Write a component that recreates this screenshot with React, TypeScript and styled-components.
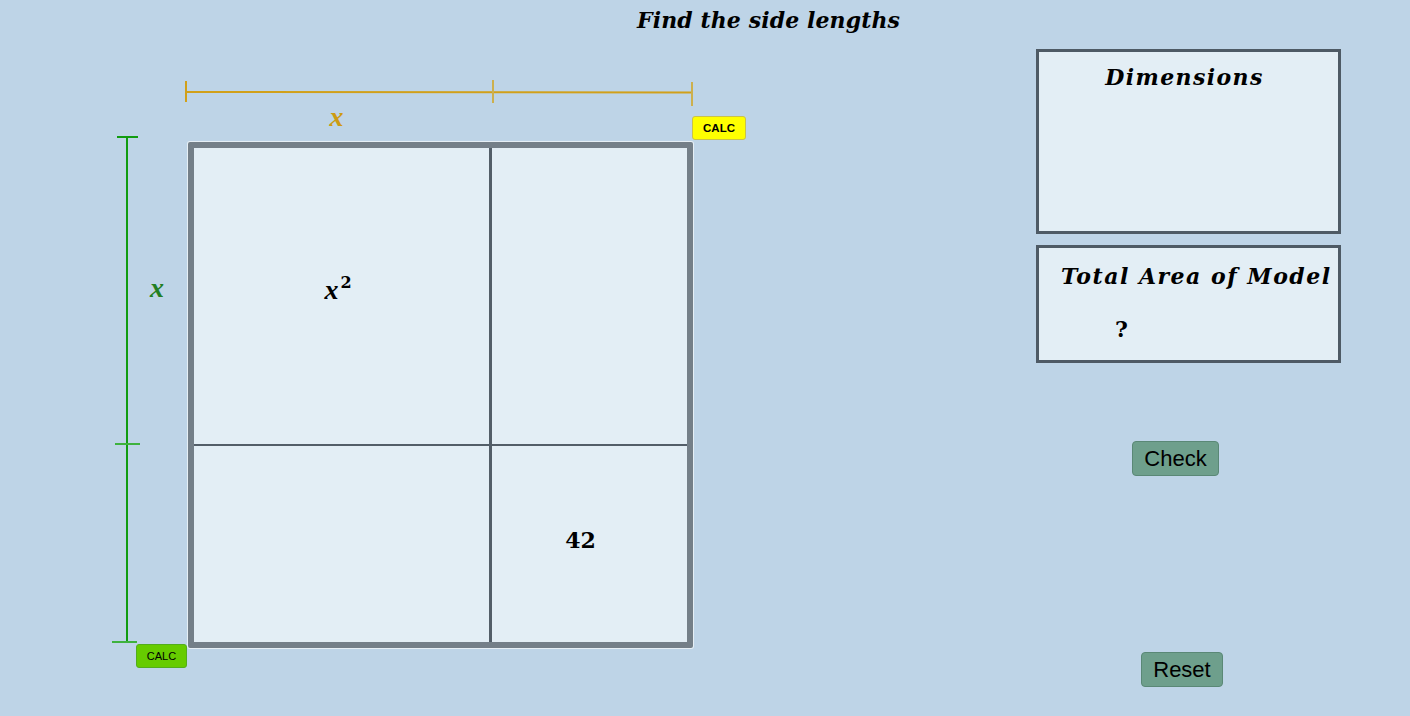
import React from "react";
import styled, { createGlobalStyle } from "styled-components";

const GlobalStyle = createGlobalStyle`
  html, body { margin: 0; padding: 0; }
  body {
    background: #bed4e7;
    font-family: "Liberation Sans", Arial, sans-serif;
  }
`;

const Page = styled.div`
  width: 1410px;
  height: 716px;
  overflow: hidden;
  background: #bed4e7;
  display: flex;
  flex-direction: column;
`;

const Header = styled.header`
  box-sizing: border-box;
  height: 37px;
  padding: 9px 0 0 127px;
  display: flex;
  justify-content: center;
`;

const Body = styled.main`
  display: flex;
  align-items: flex-start;
  padding: 0 69px 0 105px;
`;

const MathText = styled.span<{ $size: number; $weight?: number; $color?: string; $italic?: boolean; $spacing?: number }>`
  font-family: "DejaVu Serif", "Liberation Serif", serif;
  font-size: ${(p) => p.$size}px;
  font-weight: ${(p) => p.$weight ?? 700};
  font-style: ${(p) => (p.$italic === false ? "normal" : "italic")};
  letter-spacing: ${(p) => p.$spacing ?? 0}px;
  color: ${(p) => p.$color ?? "#000"};
  line-height: 1;
  white-space: nowrap;
`;

const Variable = styled.span<{ $size: number; $color?: string }>`
  font-family: "Liberation Serif", "Times New Roman", serif;
  font-size: ${(p) => p.$size}px;
  font-weight: 700;
  font-style: italic;
  color: ${(p) => p.$color ?? "#000"};
  line-height: 1;
  white-space: nowrap;
`;

const Sup = styled.sup`
  font-family: "DejaVu Serif", "Liberation Serif", serif;
  font-size: 16px;
  font-weight: 700;
  font-style: normal;
  vertical-align: 11px;
  margin-left: 2px;
  line-height: 0;
`;

/* ---------- the area model figure ---------- */

const Figure = styled.section`
  margin-top: 38px;
  display: grid;
  grid-template-columns: 40px 43px 505px 54px;
  grid-template-rows: 28px 39px 506px 22px;
`;

const TopRuler = styled.svg`
  grid-column: 3;
  grid-row: 1;
  overflow: visible;
`;

const SideRuler = styled.svg`
  grid-column: 1;
  grid-row: 2 / 4;
  overflow: visible;
`;

const TopLabelRow = styled.div`
  grid-column: 3;
  grid-row: 2;
  display: grid;
  grid-template-columns: 301px 1fr;
  align-items: start;
  justify-items: center;
  & > :first-child { margin-right: 4px; }
`;

const SideLabelColumn = styled.div`
  grid-column: 2;
  grid-row: 3;
  display: grid;
  grid-template-rows: 302px 1fr;
  align-items: center;
  justify-items: start;
  padding-left: 5px;
  & > :first-child { padding-bottom: 11px; }
`;

const CalcButton = styled.button<{ $variant: "yellow" | "green" }>`
  grid-column: ${(p) => (p.$variant === "yellow" ? "4" : "1 / 3")};
  grid-row: ${(p) => (p.$variant === "yellow" ? "2" : "4")};
  align-self: start;
  justify-self: ${(p) => (p.$variant === "yellow" ? "start" : "end")};
  margin: ${(p) => (p.$variant === "yellow" ? "13px 0 0 -1px" : "-4px 1px 0 0")};
  width: ${(p) => (p.$variant === "yellow" ? 54 : 51)}px;
  height: 24px;
  padding: 0;
  border-radius: 3px;
  border: 1px solid ${(p) => (p.$variant === "yellow" ? "#c9c24a" : "#53ad1c")};
  background: ${(p) => (p.$variant === "yellow" ? "#ffff00" : "#66cc00")};
  color: #000;
  font-family: "Liberation Sans", Arial, sans-serif;
  font-size: ${(p) => (p.$variant === "yellow" ? 11.5 : 11)}px;
  font-weight: ${(p) => (p.$variant === "yellow" ? 700 : 400)};
  line-height: 22px;
  text-align: center;
`;

const Model = styled.div`
  grid-column: 3;
  grid-row: 3;
  box-sizing: border-box;
  width: 505px;
  height: 506px;
  border: 6px solid #747f88;
  border-radius: 2px;
  box-shadow: 0 0 0 1px #e6eff5;
  display: grid;
  grid-template-columns: 295px 195px;
  grid-template-rows: 296px 196px;
  column-gap: 3px;
  row-gap: 2px;
  background: #535e68;
`;

const Cell = styled.div<{ $padRight?: number; $padBottom?: number }>`
  background: #e3eef5;
  display: flex;
  align-items: center;
  justify-content: center;
  padding-right: ${(p) => p.$padRight ?? 0}px;
  padding-bottom: ${(p) => p.$padBottom ?? 0}px;
`;

/* ---------- right side ---------- */

const SideArea = styled.aside`
  margin: 12px 0 0 auto;
  width: 305px;
  display: flex;
  flex-direction: column;
`;

const PanelStack = styled.div`
  display: flex;
  flex-direction: column;
  gap: 11px;
`;

const Panel = styled.div<{ $height: number }>`
  box-sizing: border-box;
  height: ${(p) => p.$height}px;
  border: 3px solid #4e5a65;
  background: #e3eef5;
  display: flex;
  flex-direction: column;
`;

const PanelHeading = styled.div<{ $align: "center" | "left"; $top: number; $left?: number }>`
  padding-top: ${(p) => p.$top}px;
  padding-left: ${(p) => p.$left ?? 0}px;
  padding-right: ${(p) => (p.$align === "center" ? 8 : 0)}px;
  text-align: ${(p) => p.$align};
`;

const Answer = styled.div`
  padding-top: 30px;
  padding-left: 76px;
`;

const ButtonSlot = styled.div<{ $gapAbove: number; $indent: number }>`
  margin-top: ${(p) => p.$gapAbove}px;
  padding-left: ${(p) => p.$indent}px;
  display: flex;
`;

const ActionButton = styled.button<{ $w: number }>`
  width: ${(p) => p.$w}px;
  height: 35px;
  box-sizing: border-box;
  padding: 0;
  border: 1px solid #5a8876;
  border-radius: 4px;
  background: #6e9f8c;
  color: #000;
  font-family: "Liberation Sans", Arial, sans-serif;
  font-size: 22px;
  line-height: 33px;
  text-align: center;
`;

const GOLD = "#d1a01a";
const GOLD_TICK = "#cdb04e";
const GREEN = "#119c11";
const GREEN_TICK = "#3eb23e";

export default function App() {
  return (
    <Page>
      <GlobalStyle />
      <Header>
        <MathText $size={22} $spacing={0.1}>Find the side lengths</MathText>
      </Header>

      <Body>
        <Figure>
          <TopRuler width={505} height={28} viewBox="0 0 505 28">
            <line x1={-2} y1={17} x2={504} y2={17.5} stroke={GOLD} strokeWidth={2} />
            <line x1={-2} y1={6} x2={-2} y2={27} stroke={GOLD} strokeWidth={2} />
            <line x1={305} y1={5} x2={305} y2={28} stroke={GOLD_TICK} strokeWidth={2} />
            <line x1={504} y1={7} x2={504} y2={31} stroke={GOLD_TICK} strokeWidth={2} />
          </TopRuler>

          <TopLabelRow>
            <Variable $size={28} $color="#cd9b12">x</Variable>
          </TopLabelRow>
          <CalcButton $variant="yellow">CALC</CalcButton>

          <SideRuler width={40} height={545} viewBox="0 0 40 545">
            <line x1={22} y1={34} x2={22} y2={539} stroke={GREEN} strokeWidth={2} />
            <line x1={12} y1={34} x2={33} y2={34} stroke={GREEN} strokeWidth={2} />
            <line x1={10} y1={341} x2={35} y2={341} stroke={GREEN_TICK} strokeWidth={2} />
            <line x1={7} y1={539} x2={32} y2={539} stroke={GREEN_TICK} strokeWidth={2} />
          </SideRuler>

          <SideLabelColumn>
            <Variable $size={28} $color="#237f23">x</Variable>
          </SideLabelColumn>

          <Model>
            <Cell $padRight={7} $padBottom={12}>
              <Variable $size={28}>
                x<Sup>2</Sup>
              </Variable>
            </Cell>
            <Cell />
            <Cell />
            <Cell $padRight={18} $padBottom={8}>
              <MathText $size={22} $italic={false}>42</MathText>
            </Cell>
          </Model>

          <CalcButton $variant="green">CALC</CalcButton>
        </Figure>

        <SideArea>
          <PanelStack>
            <Panel $height={185}>
              <PanelHeading $align="center" $top={14}>
                <MathText $size={22} $spacing={1.4}>Dimensions</MathText>
              </PanelHeading>
            </Panel>
            <Panel $height={118}>
              <PanelHeading $align="left" $top={17} $left={22}>
                <MathText $size={22} $spacing={1.5}>Total Area of Model</MathText>
              </PanelHeading>
              <Answer>
                <MathText $size={22} $italic={false}>?</MathText>
              </Answer>
            </Panel>
          </PanelStack>
          <ButtonSlot $gapAbove={78} $indent={96}>
            <ActionButton $w={87}>Check</ActionButton>
          </ButtonSlot>
          <ButtonSlot $gapAbove={176} $indent={105}>
            <ActionButton $w={82}>Reset</ActionButton>
          </ButtonSlot>
        </SideArea>
      </Body>
    </Page>
  );
}
